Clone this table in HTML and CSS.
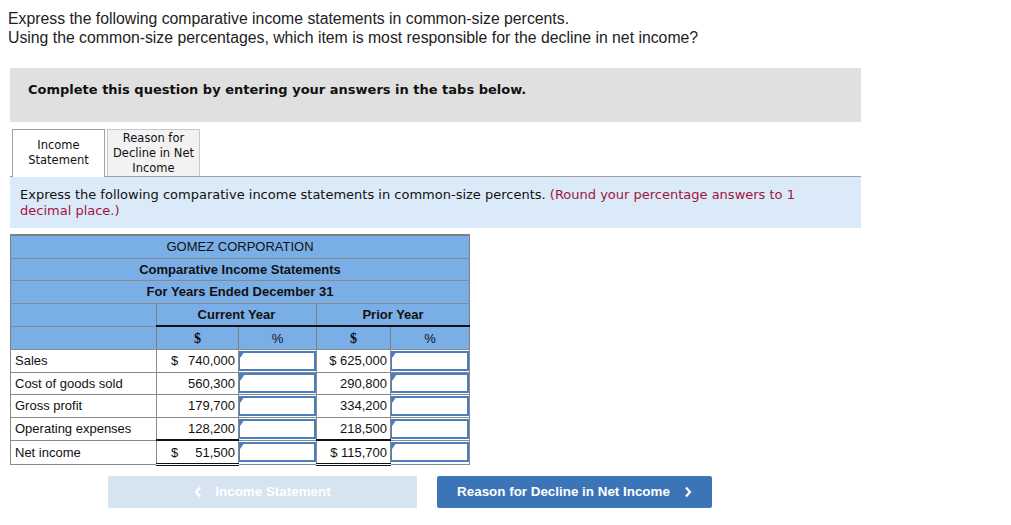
FILE: index.html
```html
<!DOCTYPE html>
<html>
<head>
<meta charset="utf-8">
<link rel="stylesheet" href="styles.css">
</head>
<body>
<div class="page">
  <div class="intro">
    <p>Express the following comparative income statements in common-size percents.</p>
    <p>Using the common-size percentages, which item is most responsible for the decline in net income?</p>
  </div>
  <div class="notice">Complete this question by entering your answers in the tabs below.</div>
  <div class="tabs">
    <div class="tab active">Income<br>Statement</div>
    <div class="tab">Reason for<br>Decline in Net<br>Income</div>
  </div>
  <div class="instr">Express the following comparative income statements in common-size percents. <span class="red">(Round your percentage answers to 1 decimal place.)</span></div>
  <table class="stmt">
    <colgroup>
      <col class="c-label"><col class="c-amt"><col class="c-pct"><col class="c-amt2"><col class="c-pct2">
    </colgroup>
    <tr class="hd"><td colspan="5">GOMEZ CORPORATION</td></tr>
    <tr class="hd bold"><td colspan="5">Comparative Income Statements</td></tr>
    <tr class="hd bold"><td colspan="5">For Years Ended December 31</td></tr>
    <tr class="hd bold yr"><td></td><td colspan="2">Current Year</td><td colspan="2">Prior Year</td></tr>
    <tr class="hd sub"><td></td><td class="b">$</td><td>%</td><td class="b">$</td><td>%</td></tr>
    <tr><td class="lbl">Sales</td><td class="amt"><span class="dol">$</span>740,000</td><td class="inp"><div class="box"></div></td><td class="amt">$ 625,000</td><td class="inp"><div class="box"></div></td></tr>
    <tr><td class="lbl">Cost of goods sold</td><td class="amt">560,300</td><td class="inp"><div class="box"></div></td><td class="amt">290,800</td><td class="inp"><div class="box"></div></td></tr>
    <tr><td class="lbl">Gross profit</td><td class="amt">179,700</td><td class="inp"><div class="box"></div></td><td class="amt">334,200</td><td class="inp"><div class="box"></div></td></tr>
    <tr><td class="lbl">Operating expenses</td><td class="amt">128,200</td><td class="inp"><div class="box"></div></td><td class="amt">218,500</td><td class="inp"><div class="box"></div></td></tr>
    <tr class="net"><td class="lbl">Net income</td><td class="amt tot"><span class="dol">$</span>51,500</td><td class="inp"><div class="box"></div></td><td class="amt tot">$ 115,700</td><td class="inp"><div class="box"></div></td></tr>
  </table>
  <div class="nav">
    <button class="btn prev"><svg class="chev" width="8" height="12" viewBox="0 0 8 12"><path d="M6 1.5 L2 6 L6 10.5" fill="none" stroke="#fff" stroke-width="2.2"/></svg>Income Statement</button>
    <button class="btn next">Reason for Decline in Net Income<svg class="chev" width="8" height="12" viewBox="0 0 8 12"><path d="M2 1.5 L6 6 L2 10.5" fill="none" stroke="#fff" stroke-width="2.2"/></svg></button>
  </div>
</div>
</body>
</html>
```

FILE: styles.css
```css
html, body { margin: 0; padding: 0; background: #fff; }
.page { padding: 9px 0 0 0; }
.intro { padding-left: 8px; font-family: "Liberation Sans", Arial, sans-serif; font-size: 15.8px; color: #222; }
.intro p { margin: 0; line-height: 19px; }
.notice {
  margin: 21px 0 0 10px; width: 851px; height: 54px; box-sizing: border-box;
  background: #e0e0e0; padding: 14px 0 0 18px;
  font-family: "DejaVu Sans", Verdana, sans-serif; font-weight: bold; font-size: 13px; color: #111;
}
.tabs { display: flex; gap: 2px; margin: 7px 0 0 10px; width: 851px; border-bottom: 1px solid #a0a0a0; padding-left: 2px; box-sizing: border-box; }
.tab {
  width: 93px; height: 47px; box-sizing: border-box; border: 1px solid #c8c8c8; border-bottom: none;
  background: #f2f2f2; text-align: center; font-family: "DejaVu Sans", Verdana, sans-serif; font-size: 11.5px;
  line-height: 15px; color: #111; padding-top: 1px;
}
.tab.active { background: #fff; border-color: #a0a0a0; height: 48px; margin-bottom: -1px; padding-top: 8px; }
.instr {
  margin-left: 10px; width: 851px; height: 51px; box-sizing: border-box; background: #dbeaf8;
  padding: 10px 50px 0 10px; font-family: "DejaVu Sans", Verdana, sans-serif; font-size: 13px; line-height: 16px; color: #111;
}
.red { color: #a0153e; }
.stmt {
  margin: 6px 0 0 10px; border-collapse: collapse; width: 459px; table-layout: fixed;
  font-family: "Liberation Sans", Arial, sans-serif; font-size: 13px; color: #111;
}
.c-label { width: 146px; } .c-amt { width: 82px; } .c-pct { width: 78px; } .c-amt2 { width: 74px; } .c-pct2 { width: 79px; }
.stmt td { height: 21.6px; padding: 0; border: 1px solid #8a8a8a; line-height: 15px; }
.stmt tr:first-child td { border-top: 2px solid #808080; }
.hd td { background: #7aaee6; text-align: center; border-left: none; border-right: none; }
.hd.bold td { font-weight: bold; }
.hd td:first-child { border-left: 1px solid #808080; }
.hd td:last-child { border-right: 1px solid #808080; }
.hd.yr td + td, .hd.sub td + td { border-left: 1px solid #808080; }
.hd.yr td + td { border-bottom: 2px solid #111; }
.hd .b { font-weight: bold; font-family: "Liberation Serif", serif; font-size: 14px; }
.stmt .lbl { padding-left: 4px; background: #fff; }
.amt { text-align: right; padding-right: 3px !important; background: #fff; }
.dol { float: left; padding-left: 14px; }
.amt.tot { border-top: 2px solid #111 !important; border-bottom: 3px double #111 !important; }
.stmt td.inp { padding: 0; position: relative; background: #fff; border-color: #8a8a8a; }
.box { height: 20px; border: 2px solid #4a7ebd; border-left-width: 1px; box-sizing: border-box; }
.stmt td.inp::before {
  content: ""; position: absolute; left: 1px; top: 1px; width: 0; height: 0;
  border-top: 7px solid #4a7ebd; border-right: 5px solid transparent;
}
.nav { display: flex; gap: 20px; margin: 10px 0 0 108px; }
.btn {
  height: 32px; border: none; border-radius: 2px; color: #fff; font-family: "Liberation Sans", Arial, sans-serif;
  font-weight: bold; font-size: 13.4px; display: flex; align-items: center; justify-content: center; padding: 0;
}
.prev { width: 309px; background: #d6e3f1; }
.prev .chev { margin-right: 13px; }
.next { width: 275px; background: #3b74b7; }
.next .chev { margin-left: 14px; }
```
